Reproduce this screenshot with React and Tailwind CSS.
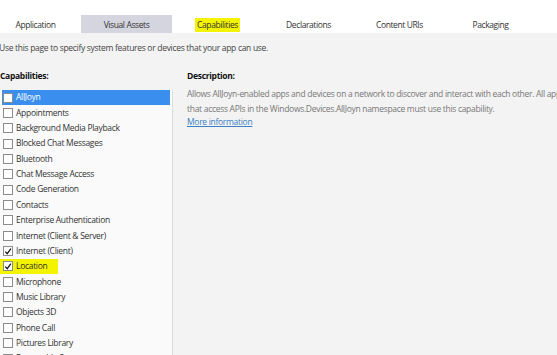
import React from "react";

const items = [
  "AllJoyn",
  "Appointments",
  "Background Media Playback",
  "Blocked Chat Messages",
  "Bluetooth",
  "Chat Message Access",
  "Code Generation",
  "Contacts",
  "Enterprise Authentication",
  "Internet (Client & Server)",
  "Internet (Client)",
  "Location",
  "Microphone",
  "Music Library",
  "Objects 3D",
  "Phone Call",
  "Pictures Library",
  "Removable Storage",
];

const checked = new Set(["Internet (Client)", "Location"]);

function Box({ on }) {
  return (
    <span className="w-[10px] h-[10px] shrink-0 bg-white border border-[#8c8c8c] flex items-center justify-center">
      {on && (
        <svg width="9" height="9" viewBox="0 0 9 9">
          <path d="M1.5 4.6 L3.6 7 L7.8 1.4" fill="none" stroke="#111" strokeWidth="1.4" />
        </svg>
      )}
    </span>
  );
}

const tabs = ["Application", "Visual Assets", "Capabilities", "Declarations", "Content URIs", "Packaging"];

export default function App() {
  return (
    <div
      className="w-[557px] h-[355px] overflow-hidden bg-[#f3f3f3] text-[#333] text-[8.5px] tracking-[-0.3px] leading-none"
      style={{ fontFamily: '"Open Sans", "Noto Sans", sans-serif' }}
    >
      <div className="h-[33px] bg-white flex items-end">
        <div className="flex -ml-[10px] h-[18px]">
          {tabs.map((t) => (
            <div
              key={t}
              className={
                "w-[91px] h-[18px] pt-[2px] flex items-center justify-center text-[8.5px] tracking-[-0.4px] " +
                (t === "Visual Assets" ? "bg-[#d5d5e0]" : "bg-white")
              }
            >
              {t === "Capabilities" ? (
                <span className="bg-[#f4f400] px-[2px] py-[3px]">{t}</span>
              ) : (
                <span>{t}</span>
              )}
            </div>
          ))}
        </div>
      </div>
      <div className="h-[30px] flex items-center -ml-[1px] text-[#444]">
        Use this page to specify system features or devices that your app can use.
      </div>
      <div className="flex">
        <div className="w-[173px] shrink-0">
          <div className="h-[27px] flex items-center font-bold text-[#111]">Capabilities:</div>
          <div className="border-r border-[#dcdcdc] bg-[#fafafa] h-[300px]">
            {items.map((it) => {
              const sel = it === "AllJoyn";
              const loc = it === "Location";
              return (
                <div
                  key={it}
                  className={
                    "h-[15.35px] flex items-center " + (sel ? "bg-[#3a8fee] text-white ml-[2px] mr-[2px] pl-[1px]" : "pl-[3px]")
                  }
                >
                  {loc ? (
                    <span className="flex items-center bg-[#f4f400] -ml-[3px] pl-[3px] w-[58px] h-[15px]">
                      <Box on />
                      <span className="ml-[3px]">{it}</span>
                    </span>
                  ) : (
                    <>
                      <Box on={checked.has(it)} />
                      <span className="ml-[3px] whitespace-nowrap">{it}</span>
                    </>
                  )}
                </div>
              );
            })}
          </div>
        </div>
        <div className="ml-[14px] whitespace-nowrap">
          <div className="h-[27px] flex items-center font-bold text-[#111]">Description:</div>
          <div className="text-[#777] leading-[15px] -mt-[4px]">
            <div>Allows AllJoyn-enabled apps and devices on a network to discover and interact with each other. All apps</div>
            <div>that access APIs in the Windows.Devices.AllJoyn namespace must use this capability.</div>
          </div>
          <div className="text-[#3a80c2] underline -mt-[2px] leading-[15px]">More information</div>
        </div>
      </div>
    </div>
  );
}
